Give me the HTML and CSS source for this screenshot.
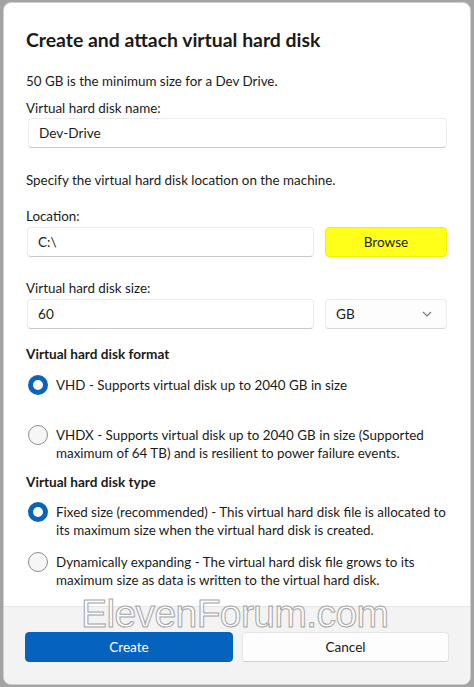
FILE: index.html
```html
<!DOCTYPE html>
<html>
<head>
<meta charset="utf-8">
<link rel="stylesheet" href="styles.css">
</head>
<body>
<div class="dialog">
  <div class="content">
    <h1 class="title">Create and attach virtual hard disk</h1>
    <p class="text t-min">50 GB is the minimum size for a Dev Drive.</p>
    <label class="text t-label1">Virtual hard disk name:</label>
    <div class="input t-in1">Dev-Drive</div>
    <p class="text t-spec">Specify the virtual hard disk location on the machine.</p>
    <label class="text t-loc">Location:</label>
    <div class="row t-in2">
      <div class="input">C:\</div>
      <div class="btn browse">Browse</div>
    </div>
    <label class="text t-size">Virtual hard disk size:</label>
    <div class="row t-in3">
      <div class="input">60</div>
      <div class="select">GB<svg class="chev" width="10" height="6" viewBox="0 0 10 6"><path d="M1 1l4 4 4-4" fill="none" stroke="#777" stroke-width="1.1"/></svg></div>
    </div>
    <h2 class="heading t-fmt">Virtual hard disk format</h2>
    <div class="radio t-vhd"><span class="dot on"></span><span>VHD - Supports virtual disk up to 2040 GB in size</span></div>
    <div class="radio t-vhdx"><span class="dot"></span><span>VHDX - Supports virtual disk up to 2040 GB in size (Supported<br>maximum of 64 TB) and is resilient to power failure events.</span></div>
    <h2 class="heading t-type">Virtual hard disk type</h2>
    <div class="radio t-fixed"><span class="dot on"></span><span>Fixed size (recommended) - This virtual hard disk file is allocated to<br>its maximum size when the virtual hard disk is created.</span></div>
    <div class="radio t-dyn"><span class="dot"></span><span>Dynamically expanding - The virtual hard disk file grows to its<br>maximum size as data is written to the virtual hard disk.</span></div>
  </div>
  <div class="footer">
    <div class="btn primary">Create</div>
    <div class="btn">Cancel</div>
  </div>
  <div class="watermark">ElevenForum.com</div>
</div>
</body>
</html>
```
FILE: styles.css
```css
html, body {
  margin: 0;
  padding: 0;
}
body {
  background: #a3a3a3;
  font-family: "Lato", "Noto Sans", sans-serif;
  color: #1b1b1b;
  width: 474px;
  height: 687px;
  overflow: hidden;
}
.dialog {
  position: relative;
  margin: 2px 3px 0 3px;
  width: 468px;
  height: 683px;
  background: #ffffff;
  border-radius: 8px;
  display: flex;
  flex-direction: column;
  overflow: hidden;
  box-sizing: border-box;
  border: 1px solid #cfcfcf;
}
.content {
  flex: 1;
  min-height: 0;
  padding: 23px 23px 0 22px;
  display: flex;
  flex-direction: column;
}
.title {
  margin: 0;
  font-size: 19.4px;
  font-weight: 700;
  line-height: 28px;
  color: #1a1a1a;
}
.text {
  display: block;
  margin: 0;
  font-size: 13.4px;
  line-height: 18px;
}
.heading {
  margin: 0;
  font-size: 13.6px;
  font-weight: 700;
  line-height: 18px;
}
.t-min { margin-top: 18px; }
.t-label1 { margin-top: 9px; }
.t-in1 { margin-top: 1px; }
.t-spec { margin-top: 23px; }
.t-loc { margin-top: 18px; }
.t-in2 { margin-top: 2px; }
.t-size { margin-top: 22px; }
.t-in3 { margin-top: 2px; }
.t-fmt { margin-top: 16px; }
.t-vhd { margin-top: 13px; }
.t-vhdx { margin-top: 31px; }
.t-type { margin-top: 11px; }
.t-fixed { margin-top: 12px; }
.t-dyn { margin-top: 14px; }

.input {
  height: 30px;
  box-sizing: border-box;
  border: 1px solid #ececec;
  border-bottom-color: #c9c9c9;
  border-radius: 4px;
  background: #fff;
  padding: 0 10px;
  font-size: 13.6px;
  line-height: 28px;
  margin-left: 2px;
}
.row {
  display: grid;
  grid-template-columns: 1fr 122px;
  gap: 11px;
}
.row .input { margin-left: 1px; }
.btn {
  height: 30px;
  box-sizing: border-box;
  border: 1px solid #e5e5e5;
  border-bottom-color: #cfcfcf;
  border-radius: 4px;
  background: #fdfdfd;
  font-size: 13.6px;
  line-height: 28px;
  text-align: center;
}
.browse {
  background: #ffff1a;
  border-color: #f2f200;
}
.select {
  height: 30px;
  box-sizing: border-box;
  border: 1px solid #ececec;
  border-bottom-color: #d6d6d6;
  border-radius: 4px;
  background: #fdfdfd;
  font-size: 13.6px;
  line-height: 28px;
  padding: 0 14px 0 10px;
  display: flex;
  align-items: center;
  justify-content: space-between;
}
.radio {
  display: flex;
  gap: 8px;
  font-size: 13.4px;
  line-height: 18px;
  padding-left: 2px;
  white-space: nowrap;
}
.dot {
  flex: none;
  width: 20px;
  height: 20px;
  box-sizing: border-box;
  border-radius: 50%;
  border: 1px solid #8d8d8d;
  background: #f6f6f6;
  margin-top: -1px;
}
.dot.on {
  border: 5px solid #0a64b8;
  background: #fff;
}
.footer {
  height: 78px;
  flex: none;
  box-sizing: border-box;
  background: #f3f3f3;
  border-top: 1px solid #e6e6e6;
  padding: 25px 21px 0 21px;
  display: grid;
  grid-template-columns: 208px 207px;
  gap: 9px;
}
.footer .btn {
  height: 30px;
}
.btn.primary {
  background: #0563be;
  border-color: #0563be;
  color: #fff;
}
.watermark {
  position: absolute;
  left: 77px;
  top: 589px;
  font-family: "Liberation Sans", sans-serif;
  font-size: 39px;
  letter-spacing: -0.6px;
  color: rgba(255,255,255,0.6);
  -webkit-text-stroke: 1px #a6a6a6;
  line-height: 44px;
  pointer-events: none;
}
```
